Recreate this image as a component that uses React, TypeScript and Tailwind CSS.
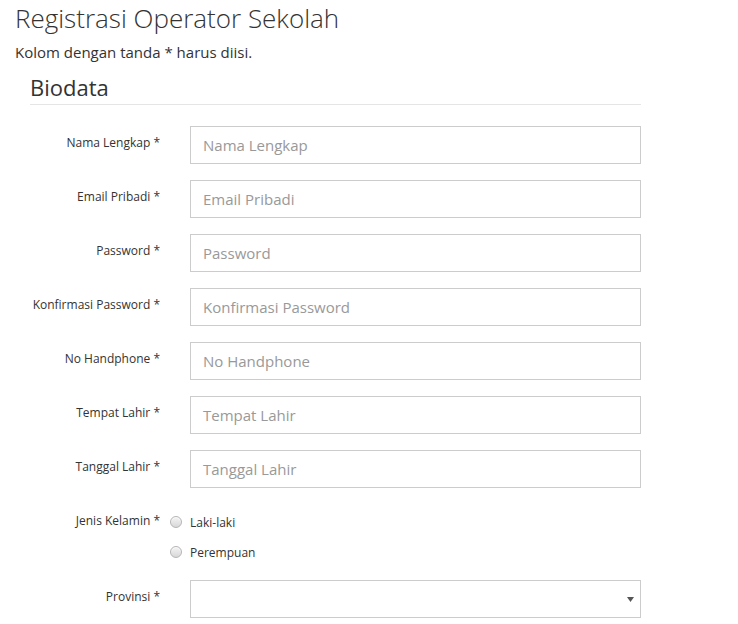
import React from "react";

const fields = [
  "Nama Lengkap",
  "Email Pribadi",
  "Password",
  "Konfirmasi Password",
  "No Handphone",
  "Tempat Lahir",
  "Tanggal Lahir",
];

function Radio() {
  return (
    <span className="inline-block w-[12px] h-[12px] rounded-full border border-[#b5b5b5] bg-gradient-to-b from-[#f4f4f4] to-[#d8d8d8] shadow-[inset_0_1px_1px_rgba(255,255,255,0.8)]" />
  );
}

export default function App() {
  return (
    <div className="bg-white w-[738px] h-[624px] overflow-hidden text-[#333] font-['Open_Sans',sans-serif] pl-[15px]">
      <h1 className="text-[26px] font-light leading-[36px] mt-[0px] text-[#333]">Registrasi Operator Sekolah</h1>
      <p className="text-[15px] leading-[20px] mt-[6px]">Kolom dengan tanda * harus diisi.</p>
      <div className="ml-[15px] w-[611px]">
        <h2 className="text-[22px] leading-[30px] mt-[10px] pb-[2px] border-b border-[#e5e5e5]">Biodata</h2>
        <div className="mt-[21px] flex flex-col gap-[16px]">
          {fields.map((f) => (
            <div key={f} className="flex items-start gap-[30px]">
              <label className="w-[130px] text-right text-[12px] leading-[17px] pt-[8px]">{f} *</label>
              <div className="w-[451px] h-[38px] border border-[#cccccc] flex items-center px-[12px] text-[15px] text-[#999]">
                {f}
              </div>
            </div>
          ))}
          <div className="flex items-start gap-[10px] mt-[8px]">
            <label className="w-[130px] text-right text-[12px] leading-[17px]">Jenis Kelamin *</label>
            <div className="flex flex-col gap-[10px]">
              <div className="flex items-center gap-[8px] text-[12px] leading-[17px]">
                <span className="mt-[3px]"><Radio /></span>
                <span>Laki-laki</span>
              </div>
              <div className="flex items-center gap-[8px] text-[12px] leading-[17px]">
                <span className="mt-[3px]"><Radio /></span>
                <span>Perempuan</span>
              </div>
            </div>
          </div>
          <div className="flex items-start gap-[30px] mt-[2px]">
            <label className="w-[130px] text-right text-[12px] leading-[17px] pt-[8px]">Provinsi *</label>
            <div className="w-[451px] h-[38px] border border-[#cccccc] flex items-center justify-end pr-[6px]">
              <svg width="7" height="5" viewBox="0 0 7 5"><path d="M0 0 L7 0 L3.5 5 Z" fill="#555" /></svg>
            </div>
          </div>
        </div>
      </div>
    </div>
  );
}
